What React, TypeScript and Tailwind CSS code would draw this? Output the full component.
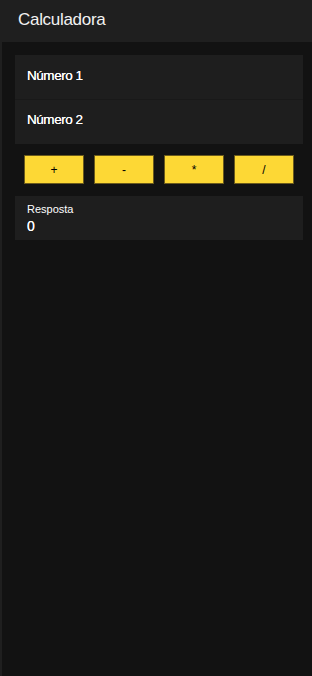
import React from 'react';

const ops = ['+', '-', '*', '/'];

export default function App() {
  return (
    <div
      className="flex min-h-[676px] flex-col bg-[#121212] text-white"
      style={{ fontFamily: '"Liberation Sans", Arial, sans-serif' }}
    >
      {/* Toolbar */}
      <header className="h-[42px] bg-[#1f1f1f] px-[18px] pt-[10px]">
        <h1 className="text-[17px] leading-[20px] font-normal tracking-[-0.3px] text-[#f2f2f2]">
          Calculadora
        </h1>
      </header>

      <main className="flex-1 border-l-2 border-[#1f1f1f] pb-4 pl-[13px] pr-[9px] pt-[13px]">
        {/* Inputs */}
        <div className="bg-[#1e1e1e]">
          <div className="h-[45px] border-b border-[#191919] px-3 pt-[13px]">
            <span className="block text-[13.5px] leading-[16px] tracking-[-0.45px] text-white [text-shadow:0_0_0.4px_#fff]">
              Número 1
            </span>
          </div>
          <div className="h-[44px] px-3 pt-[12px]">
            <span className="block text-[13.5px] leading-[16px] tracking-[-0.45px] text-white [text-shadow:0_0_0.4px_#fff]">
              Número 2
            </span>
          </div>
        </div>

        {/* Operations */}
        <div className="mt-[11px] grid grid-cols-4 gap-[10px] px-[9px]">
          {ops.map((op) => (
            <button
              key={op}
              className="h-[29px] border border-[#6b5a1c] bg-[#fdd835] text-[12px] text-black"
            >
              {op}
            </button>
          ))}
        </div>

        {/* Result */}
        <div className="mt-[12px] h-[44px] bg-[#1e1e1e] px-3 pt-[7px]">
          <span className="block text-[11px] leading-[13px] text-white">Resposta</span>
          <span className="mt-[2px] block text-[14px] leading-[16px] text-white [text-shadow:0_0_0.4px_#fff]">
            0
          </span>
        </div>
      </main>
    </div>
  );
}
